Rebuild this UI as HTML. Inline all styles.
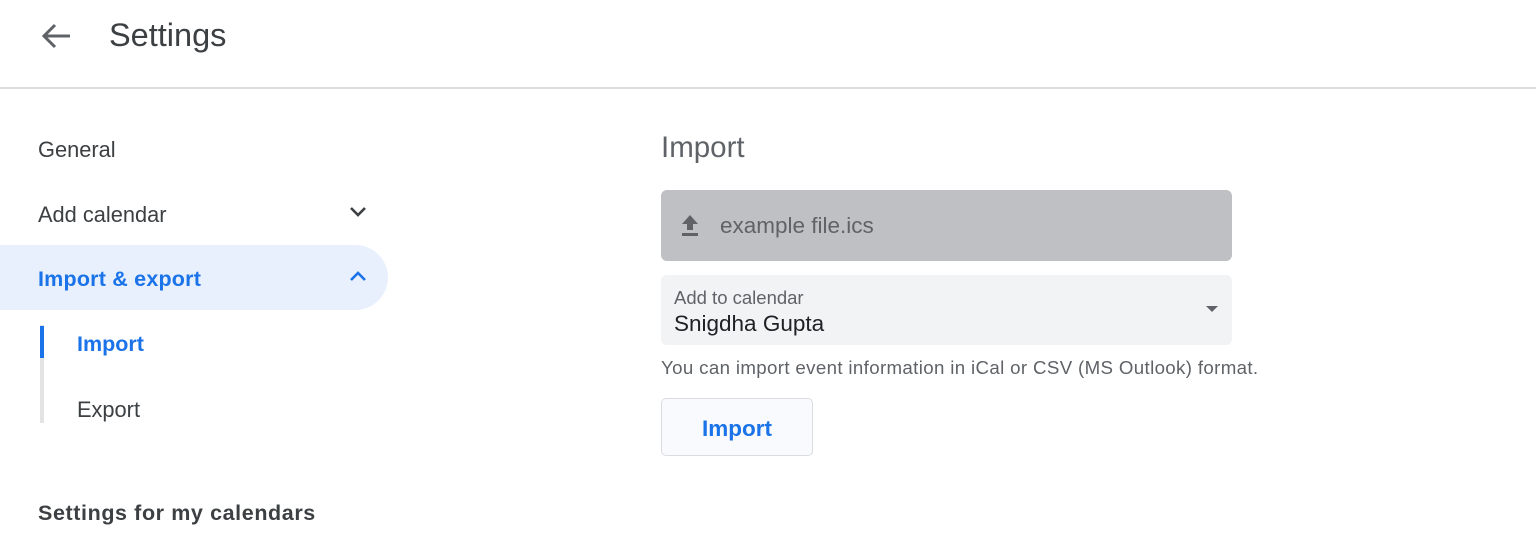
<!DOCTYPE html>
<html><head><style>
body{margin:0;width:1536px;height:537px;background:#fff;font-family:"Liberation Sans",sans-serif;position:relative;overflow:hidden;color:#3c4043}
.a{position:absolute;white-space:nowrap}
</style></head><body>
<svg class="a" style="left:40px;top:22px" width="32" height="28" viewBox="0 0 32 28"><path d="M30 14H5M15 3L4 14l11 11" stroke="#5f6368" stroke-width="3" fill="none"/></svg>
<div class="a" style="left:109px;top:17px;font-size:32.5px;color:#3c4043">Settings</div>
<div class="a" style="left:0;top:87px;width:1536px;height:2px;background:#dadce0"></div>

<div class="a" style="left:38px;top:137px;font-size:21.8px">General</div>
<div class="a" style="left:38px;top:202px;font-size:21.8px">Add calendar</div>
<svg class="a" style="left:349px;top:206px" width="18" height="12" viewBox="0 0 18 12"><path d="M2 2l7 7 7-7" stroke="#3c4043" stroke-width="2.6" fill="none"/></svg>
<div class="a" style="left:0;top:245px;width:388px;height:65px;background:#e8f0fe;border-radius:0 33px 33px 0"></div>
<div class="a" style="left:38px;top:267px;font-size:21.5px;color:#1a73e8;font-weight:bold;letter-spacing:0.2px">Import &amp; export</div>
<svg class="a" style="left:349px;top:270px" width="18" height="12" viewBox="0 0 18 12"><path d="M2 10l7-7 7 7" stroke="#1a73e8" stroke-width="2.6" fill="none"/></svg>
<div class="a" style="left:40px;top:325px;width:4px;height:98px;background:#e3e3e3"></div>
<div class="a" style="left:40px;top:326px;width:4px;height:32px;background:#1a73e8"></div>
<div class="a" style="left:77px;top:332px;font-size:21.5px;color:#1a73e8;font-weight:bold">Import</div>
<div class="a" style="left:77px;top:397px;font-size:21.8px">Export</div>
<div class="a" style="left:38px;top:501px;font-size:21.5px;font-weight:bold;letter-spacing:0.6px;color:#3c4043">Settings for my calendars</div>

<div class="a" style="left:661px;top:131px;font-size:29.5px;color:#5f6368">Import</div>
<div class="a" style="left:661px;top:190px;width:571px;height:71px;background:#bfc0c3;border-radius:6px"></div>
<svg class="a" style="left:679px;top:213px" width="22" height="24" viewBox="0 0 22 24"><path d="M11 2L3 11h5v6h6v-6h5z" fill="#5f6368"/><rect x="3" y="20" width="16" height="3" fill="#5f6368"/></svg>
<div class="a" style="left:720px;top:213px;font-size:22.5px;color:#5f6368">example file.ics</div>
<div class="a" style="left:661px;top:275px;width:571px;height:70px;background:#f1f3f4;border-radius:6px"></div>
<div class="a" style="left:674px;top:287px;font-size:18.5px;color:#5f6368">Add to calendar</div>
<div class="a" style="left:674px;top:311px;font-size:22.5px;color:#202124">Snigdha Gupta</div>
<svg class="a" style="left:1205px;top:305px" width="14" height="8" viewBox="0 0 14 8"><path d="M1 1h12L7 7z" fill="#5f6368"/></svg>
<div class="a" style="left:661px;top:357px;font-size:18.7px;letter-spacing:0.35px;color:#5f6368">You can import event information in iCal or CSV (MS Outlook) format.</div>
<div class="a" style="left:661px;top:398px;width:150px;height:56px;border:1px solid #dadce0;border-radius:5px;background:#f8fafd"></div>
<div class="a" style="left:661px;top:416px;width:152px;text-align:center;font-size:22.5px;color:#1a73e8;font-weight:bold">Import</div>
</body></html>
